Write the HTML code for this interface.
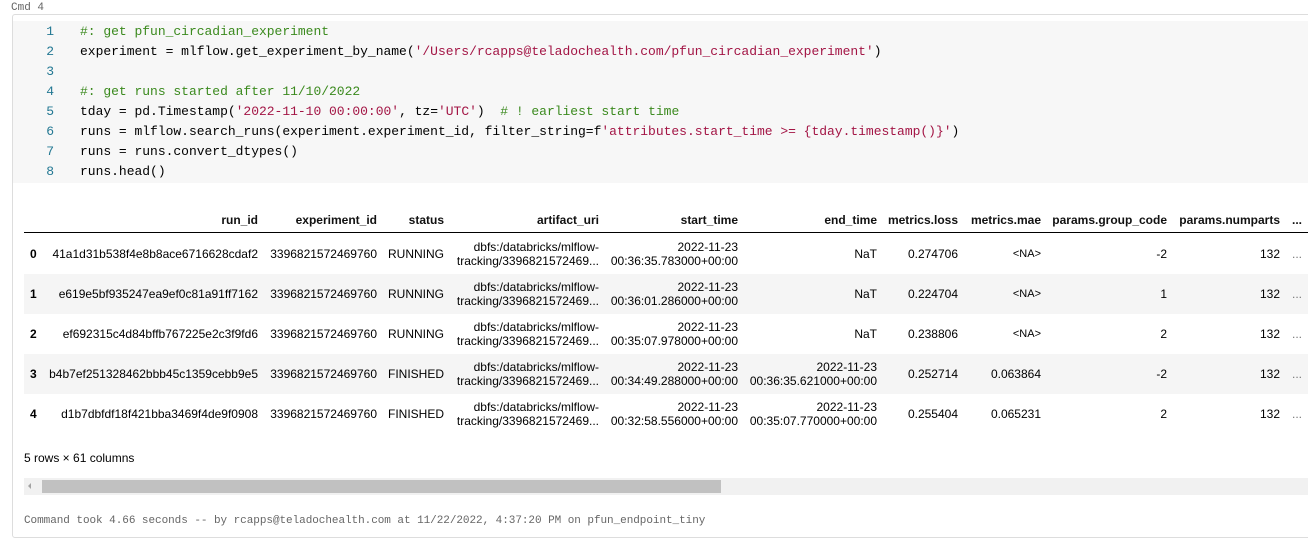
<!DOCTYPE html>
<html><head><meta charset="utf-8"><style>
*{margin:0;padding:0;box-sizing:border-box}
body{width:1308px;height:541px;background:#fff;position:relative;overflow:hidden;font-family:"Liberation Sans Narrow","Liberation Sans",sans-serif}
.cmd{position:absolute;left:11px;top:2px;font:11px "Liberation Mono",monospace;color:#666}
.cell{position:absolute;left:12px;top:14px;width:1310px;height:524px;border:1px solid #ddd;border-radius:3px}
.code{position:absolute;left:13px;top:21px;width:1300px;height:162px;background:#f7f7f7}
.ln{position:absolute;left:30px;width:24px;text-align:right;font:13px "Liberation Mono",monospace;color:#237893;line-height:20px}
.cl{position:absolute;left:80px;font:13px "Liberation Mono",monospace;color:#000;line-height:20px;white-space:pre;letter-spacing:-0.02px}
.c{color:#3b8a1e}.s{color:#a31545}
.t{position:absolute;font-size:12px;color:#000;text-align:right;display:flex;align-items:center;justify-content:flex-end;line-height:14px;white-space:nowrap}
.h{font-weight:bold;height:20px;top:210px;color:#111}
.g{position:absolute;left:24px;width:1290px;height:40px;background:#f5f5f5}
.i{justify-content:flex-start;font-weight:bold}
.na{font-size:11px}
</style></head><body>
<div class="cmd">Cmd 4</div>
<div class="cell"></div>
<div class="code"></div>
<div class="ln" style="top:22px">1</div><div class="cl" style="top:22px"><span class="c">#: get pfun_circadian_experiment</span></div>
<div class="ln" style="top:42px">2</div><div class="cl" style="top:42px">experiment = mlflow.get_experiment_by_name(<span class="s">'/Users/rcapps@teladochealth.com/pfun_circadian_experiment'</span>)</div>
<div class="ln" style="top:62px">3</div>
<div class="ln" style="top:82px">4</div><div class="cl" style="top:82px"><span class="c">#: get runs started after 11/10/2022</span></div>
<div class="ln" style="top:102px">5</div><div class="cl" style="top:102px">tday = pd.Timestamp(<span class="s">'2022-11-10 00:00:00'</span>, tz=<span class="s">'UTC'</span>)  <span class="c"># ! earliest start time</span></div>
<div class="ln" style="top:122px">6</div><div class="cl" style="top:122px">runs = mlflow.search_runs(experiment.experiment_id, filter_string=f<span class="s">'attributes.start_time &gt;= {tday.timestamp()}'</span>)</div>
<div class="ln" style="top:142px">7</div><div class="cl" style="top:142px">runs = runs.convert_dtypes()</div>
<div class="ln" style="top:162px">8</div><div class="cl" style="top:162px">runs.head()</div>

<div class="g" style="top:274px"></div><div class="g" style="top:354px"></div>
<div style="position:absolute;left:24px;top:232px;width:1290px;height:1px;background:#000"></div>

<div class="t h" style="left:45px;width:213px">run_id</div>
<div class="t h" style="left:258px;width:119px">experiment_id</div>
<div class="t h" style="left:377px;width:67px">status</div>
<div class="t h" style="left:444px;width:155px">artifact_uri</div>
<div class="t h" style="left:599px;width:139px">start_time</div>
<div class="t h" style="left:738px;width:139px">end_time</div>
<div class="t h" style="left:877px;width:81px">metrics.loss</div>
<div class="t h" style="left:958px;width:83px">metrics.mae</div>
<div class="t h" style="left:1041px;width:126px">params.group_code</div>
<div class="t h" style="left:1167px;width:113px">params.numparts</div>
<div class="t h i" style="left:1292px;width:20px">...</div>

<div class="t i" style="left:30px;top:234px;height:40px">0</div>
<div class="t" style="left:45px;width:213px;top:234px;height:40px">41a1d31b538f4e8b8ace6716628cdaf2</div>
<div class="t" style="left:258px;width:119px;top:234px;height:40px">3396821572469760</div>
<div class="t" style="left:377px;width:67px;top:234px;height:40px">RUNNING</div>
<div class="t" style="left:444px;width:155px;top:234px;height:40px">dbfs:/databricks/mlflow-<br>tracking/3396821572469...</div>
<div class="t" style="left:599px;width:139px;top:234px;height:40px">2022-11-23<br>00:36:35.783000+00:00</div>
<div class="t" style="left:738px;width:139px;top:234px;height:40px">NaT</div>
<div class="t" style="left:877px;width:81px;top:234px;height:40px">0.274706</div>
<div class="t na" style="left:958px;width:83px;top:234px;height:40px">&lt;NA&gt;</div>
<div class="t" style="left:1041px;width:126px;top:234px;height:40px">-2</div>
<div class="t" style="left:1167px;width:113px;top:234px;height:40px">132</div>
<div class="t i" style="left:1292px;top:234px;height:40px;font-weight:normal;color:#777">...</div>

<div class="t i" style="left:30px;top:274px;height:40px">1</div>
<div class="t" style="left:45px;width:213px;top:274px;height:40px">e619e5bf935247ea9ef0c81a91ff7162</div>
<div class="t" style="left:258px;width:119px;top:274px;height:40px">3396821572469760</div>
<div class="t" style="left:377px;width:67px;top:274px;height:40px">RUNNING</div>
<div class="t" style="left:444px;width:155px;top:274px;height:40px">dbfs:/databricks/mlflow-<br>tracking/3396821572469...</div>
<div class="t" style="left:599px;width:139px;top:274px;height:40px">2022-11-23<br>00:36:01.286000+00:00</div>
<div class="t" style="left:738px;width:139px;top:274px;height:40px">NaT</div>
<div class="t" style="left:877px;width:81px;top:274px;height:40px">0.224704</div>
<div class="t na" style="left:958px;width:83px;top:274px;height:40px">&lt;NA&gt;</div>
<div class="t" style="left:1041px;width:126px;top:274px;height:40px">1</div>
<div class="t" style="left:1167px;width:113px;top:274px;height:40px">132</div>
<div class="t i" style="left:1292px;top:274px;height:40px;font-weight:normal;color:#777">...</div>

<div class="t i" style="left:30px;top:314px;height:40px">2</div>
<div class="t" style="left:45px;width:213px;top:314px;height:40px">ef692315c4d84bffb767225e2c3f9fd6</div>
<div class="t" style="left:258px;width:119px;top:314px;height:40px">3396821572469760</div>
<div class="t" style="left:377px;width:67px;top:314px;height:40px">RUNNING</div>
<div class="t" style="left:444px;width:155px;top:314px;height:40px">dbfs:/databricks/mlflow-<br>tracking/3396821572469...</div>
<div class="t" style="left:599px;width:139px;top:314px;height:40px">2022-11-23<br>00:35:07.978000+00:00</div>
<div class="t" style="left:738px;width:139px;top:314px;height:40px">NaT</div>
<div class="t" style="left:877px;width:81px;top:314px;height:40px">0.238806</div>
<div class="t na" style="left:958px;width:83px;top:314px;height:40px">&lt;NA&gt;</div>
<div class="t" style="left:1041px;width:126px;top:314px;height:40px">2</div>
<div class="t" style="left:1167px;width:113px;top:314px;height:40px">132</div>
<div class="t i" style="left:1292px;top:314px;height:40px;font-weight:normal;color:#777">...</div>

<div class="t i" style="left:30px;top:354px;height:40px">3</div>
<div class="t" style="left:45px;width:213px;top:354px;height:40px">b4b7ef251328462bbb45c1359cebb9e5</div>
<div class="t" style="left:258px;width:119px;top:354px;height:40px">3396821572469760</div>
<div class="t" style="left:377px;width:67px;top:354px;height:40px">FINISHED</div>
<div class="t" style="left:444px;width:155px;top:354px;height:40px">dbfs:/databricks/mlflow-<br>tracking/3396821572469...</div>
<div class="t" style="left:599px;width:139px;top:354px;height:40px">2022-11-23<br>00:34:49.288000+00:00</div>
<div class="t" style="left:738px;width:139px;top:354px;height:40px">2022-11-23<br>00:36:35.621000+00:00</div>
<div class="t" style="left:877px;width:81px;top:354px;height:40px">0.252714</div>
<div class="t" style="left:958px;width:83px;top:354px;height:40px">0.063864</div>
<div class="t" style="left:1041px;width:126px;top:354px;height:40px">-2</div>
<div class="t" style="left:1167px;width:113px;top:354px;height:40px">132</div>
<div class="t i" style="left:1292px;top:354px;height:40px;font-weight:normal;color:#777">...</div>

<div class="t i" style="left:30px;top:394px;height:40px">4</div>
<div class="t" style="left:45px;width:213px;top:394px;height:40px">d1b7dbfdf18f421bba3469f4de9f0908</div>
<div class="t" style="left:258px;width:119px;top:394px;height:40px">3396821572469760</div>
<div class="t" style="left:377px;width:67px;top:394px;height:40px">FINISHED</div>
<div class="t" style="left:444px;width:155px;top:394px;height:40px">dbfs:/databricks/mlflow-<br>tracking/3396821572469...</div>
<div class="t" style="left:599px;width:139px;top:394px;height:40px">2022-11-23<br>00:32:58.556000+00:00</div>
<div class="t" style="left:738px;width:139px;top:394px;height:40px">2022-11-23<br>00:35:07.770000+00:00</div>
<div class="t" style="left:877px;width:81px;top:394px;height:40px">0.255404</div>
<div class="t" style="left:958px;width:83px;top:394px;height:40px">0.065231</div>
<div class="t" style="left:1041px;width:126px;top:394px;height:40px">2</div>
<div class="t" style="left:1167px;width:113px;top:394px;height:40px">132</div>
<div class="t i" style="left:1292px;top:394px;height:40px;font-weight:normal;color:#777">...</div>

<div class="t i" style="left:24px;top:450px;height:16px;font-weight:normal">5 rows × 61 columns</div>

<div style="position:absolute;left:24px;top:478px;width:1290px;height:17px;background:#f1f1f1"></div>
<div style="position:absolute;left:28px;top:483px;width:0;height:0;border-top:3px solid transparent;border-bottom:3px solid transparent;border-right:3px solid #a3a3a3"></div>
<div style="position:absolute;left:42px;top:480px;width:679px;height:13px;background:#c1c1c1"></div>

<div style="position:absolute;left:24px;top:515px;font:11px 'Liberation Mono',monospace;color:#666;white-space:pre;letter-spacing:-0.05px">Command took 4.66 seconds -- by rcapps@teladochealth.com at 11/22/2022, 4:37:20 PM on pfun_endpoint_tiny</div>
</body></html>
